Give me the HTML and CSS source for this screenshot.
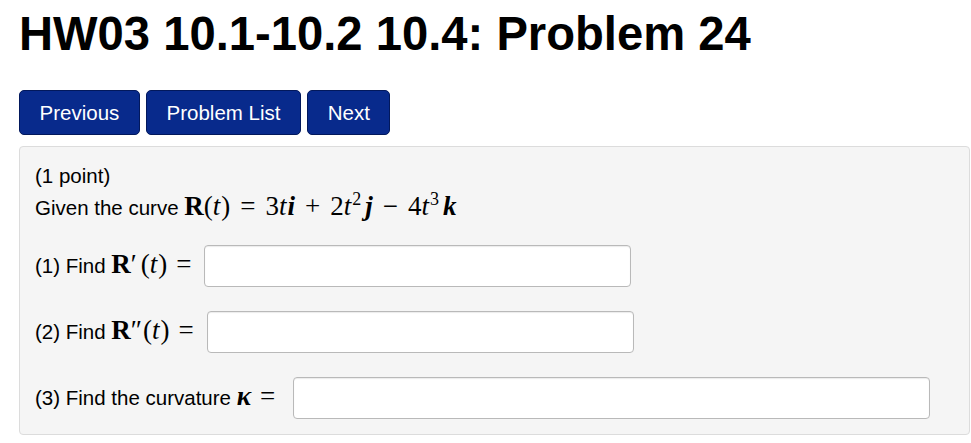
FILE: index.html
```html
<!DOCTYPE html>
<html lang="en">

<head>
  <meta charset="UTF-8">
  <meta name="viewport" content="width=device-width, initial-scale=1.0">
  <title>HW03 10.1-10.2 10.4: Problem 24</title>
  <link rel="stylesheet" href="styles.css">
</head>

<body>
  <div class="main">
    <h1 class="title">HW03 10.1-10.2 10.4: Problem 24</h1>

    <div class="nav">
      <a class="btn" href="#">Previous</a>
      <a class="btn" href="#">Problem List</a>
      <a class="btn" href="#">Next</a>
    </div>

    <div class="problem">
      <div class="line">(1 point)</div>
      <div class="line">Given the curve
        <span class="math curve"><b class="vec">R</b>(<i>t</i>)<span class="op">=</span>3<i>t</i><b class="bi">i</b><span class="op">+</span>2<i>t</i><sup>2</sup><b class="bi">j</b><span class="op">&minus;</span>4<i>t</i><sup>3</sup><b class="bi">k</b></span>
      </div>

      <div class="row">
        <span class="label">(1) Find
          <span class="math"><b class="vec">R</b><span class="prime">&prime;</span>(<i>t</i>)<span class="op">=</span></span>
        </span>
        <input class="answer" type="text">
      </div>

      <div class="row">
        <span class="label">(2) Find
          <span class="math"><b class="vec">R</b><span class="prime2">&Prime;</span>(<i>t</i>)<span class="op">=</span></span>
        </span>
        <input class="answer" type="text">
      </div>

      <div class="row">
        <span class="label">(3) Find the curvature
          <span class="math"><b class="bi kappa">&kappa;</b><span class="op">=</span></span>
        </span>
        <input class="answer wide" type="text">
      </div>
    </div>
  </div>
</body>

</html>
```

FILE: styles.css
```css
body {
  margin: 0;
  font-family: "Liberation Sans", Arial, sans-serif;
  color: #000;
  background: #fff;
}

.main {
  padding: 0 1px 0 19px;
}

.title {
  margin: 7px 0 0;
  font-size: 47.2px;
  line-height: 54px;
  font-weight: bold;
}

.nav {
  display: flex;
  gap: 6px;
  margin-top: 29px;
}

.btn {
  display: block;
  padding: 10px 19.6px;
  font-size: 20.5px;
  line-height: 23px;
  color: #fff;
  text-decoration: none;
  background: #082a8c;
  border: 1px solid #02185c;
  border-radius: 5px;
}

.problem {
  margin-top: 11px;
  padding: 13px 15px 15px;
  background: #f5f5f5;
  border: 1px solid #dcdcdc;
  border-radius: 4px;
  font-size: 20.5px;
}

.line {
  line-height: 32px;
}

.row {
  display: flex;
  align-items: center;
  height: 42px;
  margin-top: 24px;
  line-height: 32px;
}

.line + .row {
  margin-top: 21px;
}

.label {
  white-space: nowrap;
}

.math {
  font-family: "Liberation Serif", "DejaVu Serif", serif;
  font-size: 27px;
  line-height: 1;
}

.math i {
  font-style: italic;
  margin-right: 1px;
}

.math sup {
  font-size: 18px;
  line-height: 0;
  margin-right: 4px;
}

.vec {
  font-weight: bold;
  font-style: normal;
}

.bi {
  font-weight: bold;
  font-style: italic;
}

.op {
  margin: 0 9px;
}

.curve .op {
  margin: 0 10px;
}

.prime {
  margin-right: 4px;
}

.prime2 {
  margin-right: 1px;
}

.answer {
  box-sizing: border-box;
  width: 427px;
  height: 42px;
  margin-left: 4px;
  background: #fff;
  border: 1px solid #b9b9b9;
  border-radius: 4px;
  box-shadow: inset 0 1px 1px rgba(0, 0, 0, 0.08);
}

.answer.wide {
  width: 637px;
  margin-left: 9px;
}
```
